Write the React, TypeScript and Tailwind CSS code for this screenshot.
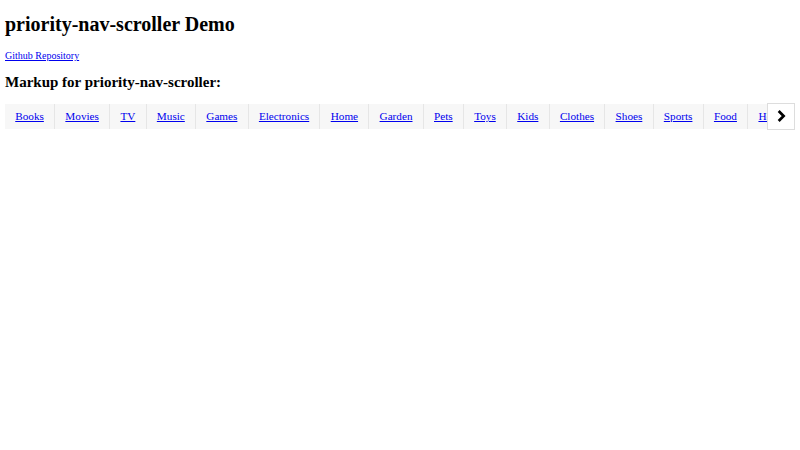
const items = [
  "Books", "Movies", "TV", "Music", "Games", "Electronics", "Home", "Garden",
  "Pets", "Toys", "Kids", "Clothes", "Shoes", "Sports", "Food", "Health",
];

export default function App() {
  return (
    <div className="min-h-screen bg-white px-[5px] pt-[13.4px] text-black font-['Liberation_Serif',serif] text-[10px]">
      <h1 className="text-[20px] font-bold leading-[1.15] mb-[13.4px]">priority-nav-scroller Demo</h1>
      <p className="mb-[12.6px] leading-[1.15]">
        <a href="#" className="text-[#0000ee] underline">Github Repository</a>
      </p>
      <h2 className="text-[15px] font-bold leading-[1.15] mb-[12.4px]">Markup for priority-nav-scroller:</h2>
      <div className="relative">
        <nav className="flex overflow-hidden whitespace-nowrap bg-[#f7f7f7] h-[25.5px] items-stretch text-[11.2px]">
          {items.map((item, i) => (
            <div
              key={item}
              className={"flex items-center px-[10.25px] " + (i < items.length - 1 ? "border-r border-[#e6e6e6]" : "")}
            >
              <a href="#" className="text-[#0000ee] underline">{item}</a>
            </div>
          ))}
        </nav>
        <button className="absolute right-0 -top-px h-[27px] w-[28px] bg-white border border-[#dddddd] flex items-center justify-center">
          <svg viewBox="0 0 24 24" width="14" height="14" fill="none" stroke="#000" strokeWidth="4.6" strokeLinecap="butt" strokeLinejoin="miter">
            <path d="M8 3.5l8.5 8.5-8.5 8.5" />
          </svg>
        </button>
      </div>
    </div>
  );
}
